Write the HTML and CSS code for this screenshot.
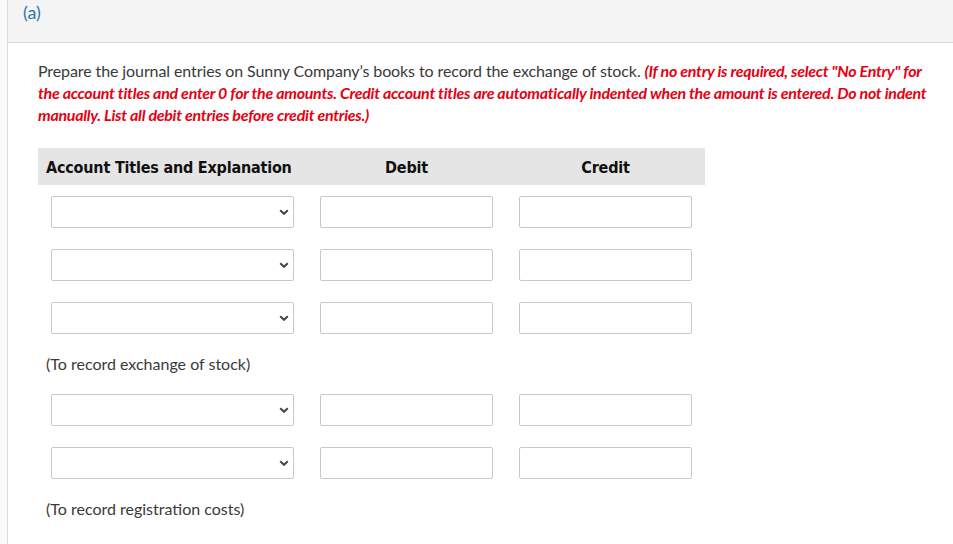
FILE: index.html
```html
<!DOCTYPE html>
<html lang="en">
<head>
	<title>Journal entries</title>
	<meta name="viewport" content="width=device-width, initial-scale=1">
	<link rel="stylesheet" href="styles.css">
</head>
<body>
	<div class="part">
		<div class="part-head">(a)</div>

		<div class="question">
			<p class="prompt">Prepare the journal entries on Sunny Company’s books to record the exchange of stock. <em class="note">(If no entry is required, select "No Entry" for the account titles and enter 0 for the amounts. Credit account titles are automatically indented when the amount is entered. Do not indent manually. List all debit entries before credit entries.)</em></p>

			<div class="journal">
				<div class="journal-head">
					<div class="col-title">Account Titles and Explanation</div>
					<div class="col-amt">Debit</div>
					<div class="col-amt">Credit</div>
				</div>

				<div class="entry">
					<div class="cell"><div class="pick"><select></select><svg class="chev" viewBox="0 0 10 6"><path d="M1.2 1.2 5 4.8 8.8 1.2" /></svg></div></div>
					<div class="cell"><input type="text"></div>
					<div class="cell"><input type="text"></div>
				</div>
				<div class="entry">
					<div class="cell"><div class="pick"><select></select><svg class="chev" viewBox="0 0 10 6"><path d="M1.2 1.2 5 4.8 8.8 1.2" /></svg></div></div>
					<div class="cell"><input type="text"></div>
					<div class="cell"><input type="text"></div>
				</div>
				<div class="entry">
					<div class="cell"><div class="pick"><select></select><svg class="chev" viewBox="0 0 10 6"><path d="M1.2 1.2 5 4.8 8.8 1.2" /></svg></div></div>
					<div class="cell"><input type="text"></div>
					<div class="cell"><input type="text"></div>
				</div>
				<div class="explain">(To record exchange of stock)</div>

				<div class="entry">
					<div class="cell"><div class="pick"><select></select><svg class="chev" viewBox="0 0 10 6"><path d="M1.2 1.2 5 4.8 8.8 1.2" /></svg></div></div>
					<div class="cell"><input type="text"></div>
					<div class="cell"><input type="text"></div>
				</div>
				<div class="entry">
					<div class="cell"><div class="pick"><select></select><svg class="chev" viewBox="0 0 10 6"><path d="M1.2 1.2 5 4.8 8.8 1.2" /></svg></div></div>
					<div class="cell"><input type="text"></div>
					<div class="cell"><input type="text"></div>
				</div>
				<div class="explain">(To record registration costs)</div>
			</div>
		</div>
	</div>
</body>
</html>
```

FILE: styles.css
```css
html,
body {
	margin: 0;
	padding: 0;
	background: #fafafa;
	font-family: Lato, "Liberation Sans", sans-serif;
	color: #3a3a3a;
}

.part {
	margin-left: 7px;
	border-left: 1px solid #dcdcdc;
	background: #fff;
	min-height: 544px;
}

.part-head {
	height: 43px;
	box-sizing: border-box;
	padding: 1px 0 0 15px;
	background: #f4f4f4;
	border-bottom: 1px solid #dcdcdc;
	color: #2f75ad;
	font-size: 18px;
}

.question {
	padding: 17px 0 0 30px;
}

.prompt {
	margin: 0;
	font-size: 16px;
	line-height: 22px;
	letter-spacing: -0.1px;
	max-width: 900px;
}

.note {
	color: #e60012;
	font-weight: bold;
	letter-spacing: -0.28px;
}

.journal {
	margin-top: 22px;
	width: 667px;
}

.journal-head {
	display: grid;
	grid-template-columns: 269px 199px 199px;
	height: 37px;
	box-sizing: border-box;
	padding-top: 2px;
	align-items: center;
	background: #e5e5e5;
	color: #111;
	font: bold 16px "DejaVu Sans Condensed", Tahoma, sans-serif;
	letter-spacing: -0.2px;
}

.col-title { padding-left: 8px; }
.col-amt { text-align: center; }

.entry {
	display: grid;
	grid-template-columns: 269px 199px 199px;
}

.cell {
	padding: 11px 13px 10px;
}

.pick {
	position: relative;
}

select,
input {
	display: block;
	width: 100%;
	height: 32px;
	box-sizing: border-box;
	margin: 0;
	border: 1px solid #c8c8c8;
	border-radius: 2px;
	background: #fff;
	appearance: none;
	-webkit-appearance: none;
}

.chev {
	position: absolute;
	right: 5px;
	top: 13px;
	width: 10px;
	height: 6px;
	pointer-events: none;
}

.chev path {
	fill: none;
	stroke: #444;
	stroke-width: 2;
}

.explain {
	padding-left: 8px;
	height: 39px;
	line-height: 40px;
	font-size: 16px;
	color: #3a3a3a;
}

.explain:last-child {
	height: 40px;
}
```
